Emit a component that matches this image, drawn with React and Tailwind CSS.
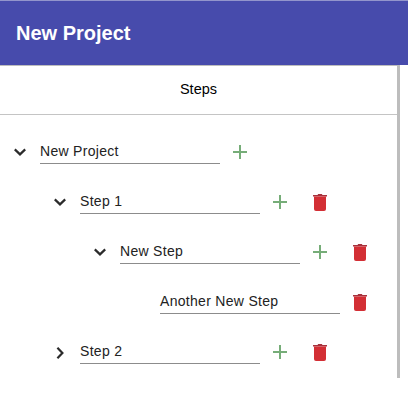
const Chevron = ({ open }) => (
  <svg width="14" height="14" viewBox="0 0 14 14" fill="none" stroke="#2b2b2b" strokeWidth="2.2" className={open ? "mt-1" : "mt-[6px]"}>
    {open ? <path d="M1.8 4.4 7 9.4l5.2-5" /> : <path d="M4.4 1.8 9.4 7l-5 5.2" />}
  </svg>
);

const Plus = () => (
  <button className="flex h-full w-10 items-center justify-center">
    <svg width="14" height="14" viewBox="0 0 14 14" stroke="#76ad78" strokeWidth="2">
      <path d="M7 0v14M0 7h14" />
    </svg>
  </button>
);

const Trash = () => (
  <button className="flex h-full w-10 items-center justify-center">
    <svg width="14" height="18" viewBox="0 0 14 18">
      <path d="M0 2h4.5l.7-1h3.6l.7 1H14v1.6H0z" fill="#a8323c" />
      <path d="M1 3.6h12V16a2 2 0 0 1-2 2H3a2 2 0 0 1-2-2z" fill="#d32f35" />
    </svg>
  </button>
);

const Row = ({ label, indent, chevron, plus, trash }) => (
  <div className={`flex h-[50px] items-start ${indent}`}>
    <div className="flex h-full w-10 items-center justify-center">
      {chevron && <Chevron open={chevron === "open"} />}
    </div>
    <div className="h-[39px] w-[180px] border-b border-[#8c8c8c] pt-[16px] text-[14px] leading-[20px] tracking-[0.3px] text-[#222]">
      {label}
    </div>
    <div className="flex h-[39px] pt-[14px]">
      {plus && <Plus />}
      {trash && <Trash />}
    </div>
  </div>
);

export default function App() {
  return (
    <div className="h-[400px] w-[408px] overflow-hidden bg-white font-['Liberation_Sans',Arial,sans-serif]">
      <header className="flex h-[65px] items-center border-t border-[#9395cc] bg-[#474bac] pl-4 text-[20px] font-bold text-white">
        New Project
      </header>
      <main className="h-[313px] w-[400px] border-t border-r-[3px] border-[#bdbdbd]">
        <div className="flex h-[49px] items-center justify-center border-b border-[#c4c4c4] text-[14.5px] text-black">
          Steps
        </div>
        <div className="pt-[10px]">
          <Row label="New Project" indent="pl-0" chevron="open" plus />
          <Row label="Step 1" indent="pl-10" chevron="open" plus trash />
          <Row label="New Step" indent="pl-20" chevron="open" plus trash />
          <Row label="Another New Step" indent="pl-[120px]" trash />
          <Row label="Step 2" indent="pl-10" chevron="closed" plus trash />
        </div>
      </main>
    </div>
  );
}
